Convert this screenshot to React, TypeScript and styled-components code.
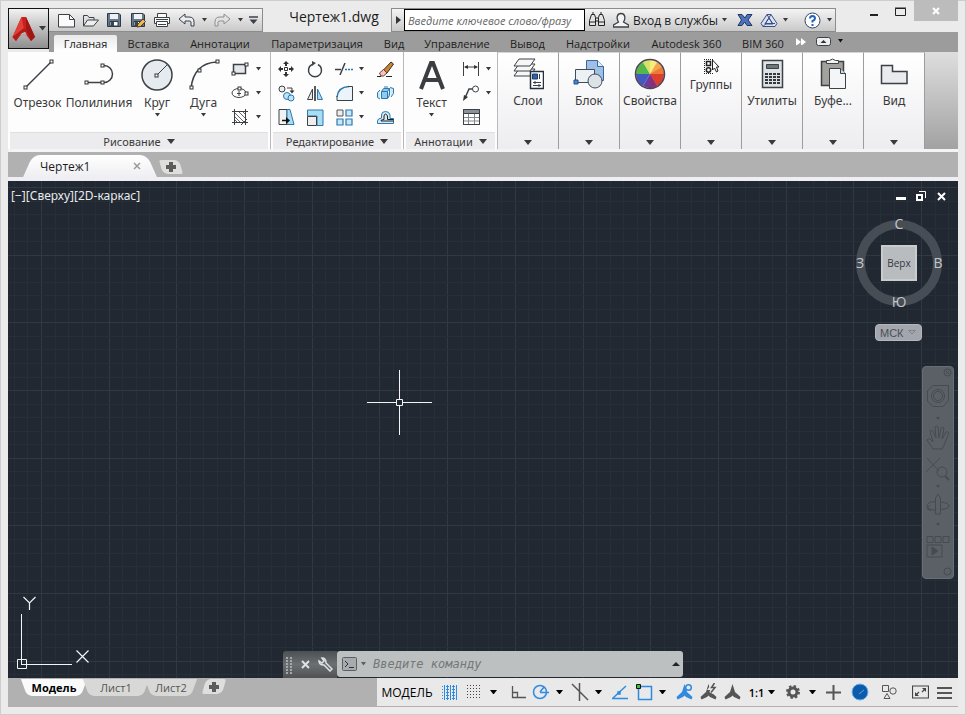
import React from "react";
import styled, { createGlobalStyle } from "styled-components";

const UI = `"Open Sans", "Noto Sans", sans-serif`;
const LABEL = `"Noto Sans", "Open Sans", sans-serif`;

const GlobalStyle = createGlobalStyle`
  * { box-sizing: border-box; }
  body { margin: 0; background: #ebebeb; font-family: ${UI}; color: #1c1c1c; }
  button { font: inherit; color: inherit; background: none; border: 0; padding: 0; margin: 0; }
  svg { display: block; flex: none; }
`;

/* ---------- Shell ---------- */

const Window = styled.div`
  display: flex;
  flex-direction: column;
  min-height: 100vh;
  padding: 0 8px 8px;
  background: #ebebeb;
  box-shadow: inset 0 0 0 1px #cdcdcd;
`;

const Header = styled.header`
  display: grid;
  grid-template-columns: 41px 1fr;
  grid-template-rows: 32px 20px;
`;

const AppButton = styled.button`
  grid-row: 1 / 3;
  height: 41px;
  margin-top: 8px;
  border: 1px solid #111;
  background: linear-gradient(#f2f2f2, #b5b5b5 60%, #8f8f8f);
  display: flex;
  align-items: center;
  justify-content: center;
  gap: 3px;
`;

const TitleRow = styled.div`
  display: flex;
  align-items: flex-end;
`;

const ToolStrip = styled.div`
  display: flex;
  align-items: center;
  flex: none;
  height: 24px;
  border: 1px solid #8c8c8c;
  background: linear-gradient(#f4f4f4, #c9c9c9);
`;

const QuickAccess = styled(ToolStrip)`
  width: 214px;
  padding-left: 5px;
  border-left: 0;
`;

const IconButton = styled.button<{ $w?: number; $gap?: number }>`
  width: ${(p) => p.$w ?? 24}px;
  height: 22px;
  margin-left: ${(p) => p.$gap ?? 0}px;
  flex: none;
  display: flex;
  align-items: center;
  justify-content: center;
`;

const DocTitle = styled.h1`
  margin: 0;
  width: 128px;
  height: 24px;
  padding-left: 14px;
  text-align: center;
  font: 400 14px/18px ${UI};
`;

const SearchStrip = styled(ToolStrip)`
  width: 445px;
  font-size: 12px;
`;

const SearchInput = styled.input`
  width: 181px;
  flex: none;
  height: 22px;
  padding: 0 3px;
  border: 1px solid #000;
  border-radius: 0;
  background: #fff;
  font: italic 11px/20px ${UI};
  &::placeholder { color: #666; opacity: 1; }
`;

const SignIn = styled.button`
  width: 104px;
  flex: none;
  display: flex;
  align-items: center;
  gap: 4px;
  white-space: nowrap;
  font-size: 12px;
`;

const Divider = styled.span`
  width: 1px;
  height: 22px;
  background: #a8a8a8;
  margin-left: 5px;
`;

const WindowButtons = styled.div`
  display: flex;
  align-self: flex-start;
  margin-left: auto;
`;

const WindowButton = styled.button<{ $close?: boolean }>`
  width: ${(p) => (p.$close ? 44 : 27)}px;
  height: ${(p) => (p.$close ? 21 : 23)}px;
  display: flex;
  align-items: center;
  justify-content: center;
  background: ${(p) => (p.$close ? "#bcbcbc" : "none")};
`;

const RibbonTabs = styled.nav`
  display: flex;
  align-items: flex-end;
  padding-left: 5px;
  background: #9c9c9c;
  font-size: 11px;
`;

const RibbonTab = styled.button<{ $w: number; $active?: boolean }>`
  width: ${(p) => p.$w}px;
  height: 17px;
  line-height: 17px;
  white-space: nowrap;
  display: flex;
  justify-content: center;
  flex: none;
  background: ${(p) => (p.$active ? "linear-gradient(#e9e9e9, #fff)" : "none")};
  border-radius: 2px 2px 0 0;
`;

/* ---------- Ribbon ---------- */

const Ribbon = styled.section`
  display: flex;
  height: 100px;
  border-bottom: 3px solid #f4f4f6;
  background: linear-gradient(#dedede, #a2a2a2);
  font-family: ${LABEL};
  font-size: 12px;
  color: #3a3a3a;
`;

const Panel = styled.div<{ $w: number }>`
  width: ${(p) => p.$w}px;
  flex: none;
  display: flex;
  flex-direction: column;
  background: #fdfdfd;
  border-right: 1px solid #b9b9b9;
`;

const PanelBody = styled.div`
  flex: 1;
  display: flex;
  padding-top: 5px;
`;

const PanelTitle = styled.button`
  height: 17px;
  margin: 0 2px;
  background: #ececee;
  border-top: 1px solid #dedede;
  display: flex;
  align-items: center;
  justify-content: center;
  gap: 6px;
  font-size: 11px;
`;

const BigTool = styled.button<{ $w: number }>`
  width: ${(p) => p.$w}px;
  flex: none;
  display: flex;
  flex-direction: column;
  align-items: center;
  white-space: nowrap;
`;

const ToolLabel = styled.span`
  line-height: 16px;
  margin: 2px 0;
`;

const ToolGrid = styled.div<{ $cols: string }>`
  display: grid;
  grid-template-columns: ${(p) => p.$cols};
  grid-auto-rows: 24px;
`;

const Cell = styled.button`
  display: flex;
  align-items: center;
  justify-content: center;
`;

const SlimPanel = styled.button`
  width: 61px;
  flex: none;
  display: flex;
  flex-direction: column;
  align-items: center;
  padding: 4px 0;
  border: solid;
  border-width: 1px 1px 0 0;
  border-color: #d4d4d4 #9d9d9d;
  background: linear-gradient(#fff, #ededf0);
  white-space: nowrap;
`;

const SlimLabel = styled.span`
  line-height: 16px;
  margin: 2px 0 auto;
`;

/* ---------- File tabs ---------- */

const FileTabs = styled.div`
  display: flex;
  align-items: flex-end;
  height: 29px;
  padding-left: 20px;
  background: #b1b1b1;
  border-bottom: 4px solid #efeff3;
`;

const FileTab = styled.div`
  position: relative;
  isolation: isolate;
  width: 124px;
  height: 22px;
  padding: 0 8px 0 12px;
  display: flex;
  align-items: center;
  justify-content: space-between;
  font-size: 12px;
  &::before, &::after {
    content: "";
    position: absolute;
    z-index: -1;
    top: 0;
    bottom: 0;
    width: 70%;
    background: linear-gradient(#fff, #efeff3);
  }
  &::before { left: 0; transform: skewX(-24deg); border-radius: 7px 0 0 0; }
  &::after { right: 0; transform: skewX(24deg); border-radius: 0 7px 0 0; }
`;

const AddTab = styled.button<{ $flip?: boolean }>`
  position: relative;
  isolation: isolate;
  width: 20px;
  height: ${(p) => (p.$flip ? 15 : 14)}px;
  margin: ${(p) => (p.$flip ? "0 0 0 9px" : "0 0 3px 9px")};
  display: flex;
  align-items: center;
  justify-content: center;
  &::before {
    content: "";
    position: absolute;
    z-index: -1;
    inset: 0;
    border-radius: ${(p) => (p.$flip ? "5px 2px 5px 2px" : "2px 5px 2px 5px")};
    background: #dededd;
    transform: skewX(${(p) => (p.$flip ? -16 : 16)}deg);
  }
`;

/* ---------- Drawing area ---------- */

const Viewport = styled.main`
  position: relative;
  flex: 1;
  display: flex;
  flex-direction: column;
  background: #212832;
  color: #e8eaec;
  overflow: hidden;
`;

const GridLines = styled.svg`
  position: absolute;
  inset: 0;
  width: 100%;
  height: 100%;
`;

const Crosshair = styled.svg`
  position: absolute;
  left: 359px;
  top: 189px;
`;

const UcsIcon = styled.svg`
  position: absolute;
  left: 8px;
  bottom: 0;
`;

const ViewportBar = styled.div`
  position: relative;
  display: flex;
  justify-content: space-between;
  padding: 6px 10px 0 3px;
  font: 12px/16px ${LABEL};
`;

const ViewportLinks = styled.div`
  display: flex;
  height: 18px;
`;

const ViewportButtons = styled.div`
  display: flex;
  gap: 6px;
`;

const SmallButton = styled.button`
  width: 14px;
  height: 18px;
  display: flex;
  align-items: center;
  justify-content: center;
`;

const Navigation = styled.aside`
  position: relative;
  display: flex;
  flex-direction: column;
  align-items: flex-end;
  padding-top: 10px;
`;

const Compass = styled.div`
  position: relative;
  width: 96px;
  height: 96px;
  margin-right: 11px;
  display: grid;
  grid-template-columns: 18px 1fr 18px;
  grid-template-rows: 18px 1fr 18px;
  place-items: center;
  font: 14px/18px ${UI};
  color: #c3c7cb;
  &::before {
    content: "";
    position: absolute;
    inset: 5px;
    border: 9px solid #474d55;
    border-radius: 50%;
  }
`;

const Direction = styled.button<{ $area: string }>`
  position: relative;
  grid-area: ${(p) => p.$area};
`;

const CubeFace = styled.button`
  position: relative;
  grid-area: 2 / 2;
  width: 36px;
  height: 36px;
  background: #b9bcbf;
  border: 2px solid #c9cccf;
  color: #33383e;
  font: 10px/14px ${UI};
`;

const CoordSystem = styled.button`
  width: 47px;
  height: 17px;
  margin: 13px 36px 0 0;
  display: flex;
  align-items: center;
  justify-content: space-between;
  padding: 0 5px 0 4px;
  border: 1px solid #b4b7bc;
  border-radius: 4px;
  background: #a3a6ad;
  color: #4a4f58;
  font: 11px/14px "Liberation Sans", sans-serif;
`;

const NavBar = styled.div`
  width: 32px;
  height: 213px;
  margin: 25px 4px 0 0;
  display: flex;
  flex-direction: column;
  border: 1px solid #686e74;
  border-radius: 4px;
  background: #5a6066;
`;

const NavButton = styled.button<{ $h: number; $end?: boolean }>`
  height: ${(p) => p.$h}px;
  display: flex;
  align-items: center;
  justify-content: ${(p) => (p.$end ? "flex-end" : "center")};
  padding-right: ${(p) => (p.$end ? 1 : 0)}px;
`;

const CommandLine = styled.div`
  position: relative;
  display: flex;
  width: 400px;
  height: 27px;
  margin: auto auto 0;
`;

const CommandHandle = styled.div`
  width: 54px;
  display: flex;
  align-items: center;
  justify-content: space-between;
  padding: 0 5px 0 3px;
  background: linear-gradient(#4c5053, #6b6f71 50%, #4e5255);
  border-radius: 3px 0 0 0;
`;

const CommandField = styled.div`
  flex: 1;
  display: flex;
  align-items: center;
  padding: 0 3px 0 5px;
  margin-bottom: 1px;
  background: #bcc0c1;
  border-radius: 3px;
`;

const CommandInput = styled.input`
  flex: 1;
  min-width: 0;
  border: 0;
  padding: 0 0 0 4px;
  background: none;
  font: italic 12px/18px "DejaVu Sans Mono", monospace;
  &::placeholder { color: #747879; opacity: 1; }
`;

/* ---------- Bottom bar ---------- */

const Footer = styled.footer`
  display: flex;
  height: 29px;
  background: #b1b1b1;
`;

const LayoutTabs = styled.div`
  display: flex;
  align-items: flex-start;
  padding: 1px 0 0 15px;
  font-size: 11px;
`;

const LayoutTab = styled.button<{ $w: number; $active?: boolean }>`
  position: relative;
  isolation: isolate;
  width: ${(p) => p.$w}px;
  height: 17px;
  line-height: 16px;
  font-weight: ${(p) => (p.$active ? 700 : 400)};
  color: ${(p) => (p.$active ? "#000" : "#555")};
  &::before, &::after {
    content: "";
    position: absolute;
    z-index: -1;
    top: 0;
    bottom: 0;
    width: 70%;
    background: ${(p) => (p.$active ? "#fafafa" : "#d8d8d6")};
  }
  &::before { left: 1px; transform: skewX(20deg); border-radius: 0 0 0 5px; }
  &::after { right: 1px; transform: skewX(-20deg); border-radius: 0 0 5px 0; }
`;

const StatusBar = styled.div`
  width: 581px;
  height: 28px;
  margin-left: auto;
  display: flex;
  align-items: center;
  background: #e9e9ea;
  font-size: 12px;
  color: #000;
`;

const StatusText = styled.button<{ $w: number; $gap?: number; $tight?: boolean }>`
  width: ${(p) => p.$w}px;
  margin-left: ${(p) => p.$gap ?? 0}px;
  display: flex;
  align-items: center;
  justify-content: center;
  gap: 4px;
  font-size: ${(p) => (p.$tight ? 11 : 12)}px;
  font-weight: ${(p) => (p.$tight ? 600 : 400)};
  white-space: nowrap;
`;

/* ---------- Icons ---------- */

type IconProps = {
  w?: number;
  h?: number;
  box?: string;
  s?: string;
  sw?: number;
  children: React.ReactNode;
};

const Icon = ({ w = 18, h = 18, box, s = "#3c4146", sw = 1, children }: IconProps) => (
  <svg width={w} height={h} viewBox={box ?? `0 0 ${w} ${h}`} fill="none" stroke={s} strokeWidth={sw} aria-hidden="true">
    {children}
  </svg>
);

const Caret = ({ size = 6, color = "#3a3a3a" }: { size?: number; color?: string }) => (
  <svg width={size} height={size / 2 + 1} viewBox="0 0 8 5" preserveAspectRatio="none" aria-hidden="true">
    <path d="M0 0h8L4 5z" fill={color} />
  </svg>
);

const Node = ({ x, y }: { x: number; y: number }) => (
  <rect x={x - 1.5} y={y - 1.5} width="3" height="3" fill="#fff" stroke="#333" />
);

const Plus = () => (
  <Icon w={10} h={10} s="#5c5c5c" sw={4}><path d="M5 0v10M0 5h10" /></Icon>
);

const Floppy = ({ pencil }: { pencil?: boolean }) => (
  <Icon w={16} h={16}>
    <path d="M1.500 1.500h11.500l1.500 1.500v11.500h-13z" fill="#64798e" stroke="#2f3b47" />
    <path d="M4 2h8v5H4z" fill="#eef2f5" stroke="none" />
    <path d="M4 9.500h8V14H4z" fill="#fff" stroke="#2f3b47" />
    <path d="M5 10h3v4H5z" fill="#39454f" stroke="none" />
    {pencil && <path d="M7 15l1-3 5-5 2.500 2.500-5 5z" fill="#f0b64f" stroke="#5d3f14" />}
  </Icon>
);

const AnnotationMark = ({ mode }: { mode: "star" | "bolt" | "plain" }) => {
  const c = mode === "star" ? STATUS_BLUE : "#555";
  return (
    <Icon w={18} h={18} s={c}>
      <path d="M8.500 1L11 9l5.500 5-1 2.500L10 14 8.500 12.500 7 14l-5.500 2.500-1-2.500L6 9z" fill={c} stroke="none" />
      {mode === "star" && <circle cx="12.500" cy="4.500" r="2.800" fill="#e9e9ea" strokeWidth="1.500" />}
      {mode === "bolt" && (
        <>
          <path d="M14.500 0L11 5h3l-3 5" stroke="#e9e9ea" strokeWidth="4" />
          <path d="M14.500 0L11.500 4.500h3.500l-4 5" strokeWidth="1.500" />
        </>
      )}
    </Icon>
  );
};

/* ---------- Data ---------- */

const STATUS_BLUE = "#2f8ae0";
const BLUE = "#2e78ad";

const ribbonTabs: [string, number][] = [
  ["Главная", 63], ["Вставка", 63], ["Аннотации", 80], ["Параметризация", 114],
  ["Вид", 40], ["Управление", 86], ["Вывод", 55], ["Надстройки", 86],
  ["Autodesk 360", 91], ["BIM 360", 62],
];

const range = (n: number) => Array.from({ length: n }, (_, i) => i);
const GRID_STEP = 880 / 65;

const wheelColors = ["#f7ec7c", "#f3a54a", "#dd3f2c", "#6b3c9c", "#4459c0", "#55b649"];

const wheelSlice = (i: number) => {
  const a = (i * Math.PI) / 3 - (2 * Math.PI) / 3;
  const b = a + Math.PI / 3;
  return `M16 16L${16 + 14 * Math.cos(a)} ${16 + 14 * Math.sin(a)}A14 14 0 0 1 ${16 + 14 * Math.cos(b)} ${16 + 14 * Math.sin(b)}z`;
};

/* ---------- Sections ---------- */

const TopBar = () => (
  <Header>
    <AppButton aria-label="Меню приложения">
      <svg width="24" height="26" viewBox="0 0 24 26" aria-hidden="true">
        <path d="M9.500 1h4.500l9 20-4 4-4-5-3-2-4 2-4 5-3.500-4z" fill="#c9201f" />
        <path d="M9.500 1l2.500 12-4 5-7.500 3z" fill="#df4038" />
        <path d="M14 1l9 20-4 4-5-11z" fill="#a01614" />
        <path d="M8 20l4-7 3 7-3-2z" fill="#b9b9b9" />
        <path d="M.5 21L12 12l3 3-7 3-4 7z" fill="#b31b19" />
      </svg>
      <Caret size={7} />
    </AppButton>
    <TitleRow>
      <QuickAccess>
        <IconButton aria-label="Новый">
          <Icon w={17} h={15}><path d="M.5 1.500h11l5 5v7.500H.5z" fill="#fafafa" /><path d="M11.500 1.500v5h5" /></Icon>
        </IconButton>
        <IconButton aria-label="Открыть">
          <Icon w={17} h={15}><path d="M1.500 13V2.500h4l1.500 2h5V7" /><path d="M1.500 13l4-6h11l-5 6z" fill="#eee" /></Icon>
        </IconButton>
        <IconButton aria-label="Сохранить"><Floppy /></IconButton>
        <IconButton aria-label="Сохранить как"><Floppy pencil /></IconButton>
        <IconButton aria-label="Печать">
          <Icon w={18} h={16}>
            <path d="M4.500 5V1.500h9V5M1.500 5.500h15v6h-15z" fill="#fafafa" />
            <path d="M3.500 9.500h11v5h-11z" fill="#fff" /><path d="M3 7.500h12M5 12.500h8" />
          </Icon>
        </IconButton>
        <IconButton aria-label="Отменить">
          <Icon w={17} h={14}><path d="M1 6l6-5v3h4q5 0 5 5v4h-3V9q0-1-2-1H7v3z" fill="#e8edf2" /></Icon>
        </IconButton>
        <IconButton $w={12} aria-label="Список отмены"><Caret size={5} /></IconButton>
        <IconButton aria-label="Повторить">
          <Icon w={17} h={14} s="#8b8f93"><path d="M16 6l-6-5v3H6Q1 4 1 9v4h3V9q0-1 2-1h4v3z" fill="#e2e2e2" /></Icon>
        </IconButton>
        <IconButton $w={12} aria-label="Список повтора"><Caret size={5} /></IconButton>
        <IconButton $w={14} aria-label="Настройка панели">
          <Icon w={9} h={8}><path d="M0 1h9" strokeWidth="1.500" /><path d="M.5 3.500h8L4.500 8z" fill="#3c4146" stroke="none" /></Icon>
        </IconButton>
      </QuickAccess>
      <DocTitle>Чертеж1.dwg</DocTitle>
      <SearchStrip>
        <IconButton $w={12} aria-label="Свернуть поиск">
          <Icon w={5} h={8}><path d="M0 0v8l5-4z" fill="#333" stroke="none" /></Icon>
        </IconButton>
        <SearchInput aria-label="Поиск" placeholder="Введите ключевое слово/фразу" />
        <IconButton aria-label="Найти">
          <Icon w={16} h={16} s="#222" sw={1}>
            <path d="M2.500 2.500h3l1 3v8h-6v-5zM13.500 2.500h-3l-1 3v8h6v-5z" fill="#e4e4e4" />
            <path d="M.5 10h6M9.500 10h6M6.500 6h3M6.500 9h3M3 1h2M11 1h2" />
          </Icon>
        </IconButton>
        <IconButton aria-label="Профиль">
          <Icon w={16} h={17}><path d="M5.500 10C3 6 4 1.500 8 1.500S13 6 10.500 10l5 3v2H.5v-2z" fill="#f4f4f4" strokeWidth="1.300" /></Icon>
        </IconButton>
        <SignIn>Вход в службы <Caret size={5} /></SignIn>
        <Icon w={16} h={14} s="#1f3768">
          <path d="M1 1.500h4l3 3.500 2-3.500h5L11 7l4 5.500h-5L7.500 9 5 12.500H1L4.500 7z" fill="#4d72b8" />
        </Icon>
        <IconButton $w={20} $gap={6} aria-label="Autodesk 360">
          <Icon w={18} h={15} s="#3a4f86">
            <path d="M7 1.500h4l6 9-2 3H3l-2-3z" fill="#dbe3f2" /><path d="M9 5l4 6H5zM7 1.500L12 10M11 1.500L5 11M3 13.500l3-3h9" />
          </Icon>
        </IconButton>
        <IconButton $w={12} aria-label="Список Autodesk 360"><Caret size={5} /></IconButton>
        <Divider />
        <IconButton $w={20} $gap={6} aria-label="Справка">
          <Icon w={17} h={17} s="#31465f">
            <circle cx="8.500" cy="8.500" r="7.500" fill="#fff" />
            <path d="M6 6.500Q6 4 8.500 4T11 6.500Q11 8 8.500 9v1.500M8.500 12v2" stroke="#2263b5" strokeWidth="2" />
          </Icon>
        </IconButton>
        <IconButton $w={14} aria-label="Список справки"><Caret size={5} /></IconButton>
      </SearchStrip>
      <WindowButtons>
        <WindowButton aria-label="Свернуть"><Icon w={10} h={10} s="#222" sw={2}><path d="M1 8h8" /></Icon></WindowButton>
        <WindowButton aria-label="Развернуть"><Icon w={11} h={9} s="#222"><path d="M.5 1.500h10v7H.5zM0 1h11" /></Icon></WindowButton>
        <WindowButton $close aria-label="Закрыть"><Icon w={8} h={8} s="#fff" sw={2}><path d="M1 1l6 6M7 1L1 7" /></Icon></WindowButton>
      </WindowButtons>
    </TitleRow>
    <RibbonTabs>
      {ribbonTabs.map(([name, w], i) => (
        <RibbonTab key={name} $w={w} $active={i === 0}>{name}</RibbonTab>
      ))}
      <IconButton $w={14} aria-label="Другие вкладки">
        <Icon w={10} h={8} box="0 -1 10 8"><path d="M0 0l5 4-5 4zM5 0l5 4-5 4z" fill="#fff" stroke="none" /></Icon>
      </IconButton>
      <IconButton $w={30} aria-label="Свернуть ленту">
        <Icon w={15} h={9}><rect x=".5" y=".5" width="14" height="8" rx="2" fill="#eee" /><path d="M4.500 6h6l-3-3z" fill="#333" stroke="none" /></Icon>
      </IconButton>
      <IconButton $w={5} aria-label="Вид ленты"><Caret size={5} color="#111" /></IconButton>
    </RibbonTabs>
  </Header>
);

const DrawPanel = () => (
  <Panel $w={263}>
    <PanelBody>
      <BigTool $w={59}>
        <Icon w={36} h={36}><path d="M5 31L31 5" strokeWidth="1.500" /><Node x={5.500} y={30.500} /><Node x={31.500} y={4.500} /></Icon>
        <ToolLabel>Отрезок</ToolLabel>
      </BigTool>
      <BigTool $w={64}>
        <Icon w={36} h={36}><path d="M5 25.500h18a8.500 8.500 0 0 0 0-17" strokeWidth="1.500" /><Node x={5.500} y={25.500} /><Node x={21.500} y={25.500} /><Node x={21.500} y={8.500} /></Icon>
        <ToolLabel>Полилиния</ToolLabel>
      </BigTool>
      <BigTool $w={52}>
        <Icon w={36} h={36}>
          <circle cx="18" cy="18" r="15" fill="#e6ebef" strokeWidth="1.500" /><path d="M18 18L28 8" /><Node x={17.500} y={18.500} />
        </Icon>
        <ToolLabel>Круг</ToolLabel>
        <Caret size={5} />
      </BigTool>
      <BigTool $w={41}>
        <Icon w={36} h={36}><path d="M5 31Q8 6 31 5" strokeWidth="1.500" /><Node x={5.500} y={30.500} /><Node x={13.500} y={13.500} /><Node x={31.500} y={4.500} /></Icon>
        <ToolLabel>Дуга</ToolLabel>
        <Caret size={5} />
      </BigTool>
      <ToolGrid $cols="32px 4px">
        <Cell aria-label="Прямоугольник"><Icon w={18} h={14}><path d="M2.500 2.500h12v9h-12z" fill="#e4e8ec" strokeWidth="1.500" /><Node x={2.500} y={11.500} /><Node x={15.500} y={2.500} /></Icon></Cell>
        <Cell aria-label="Прямоугольник, варианты"><Caret size={5} /></Cell>
        <Cell aria-label="Эллипс"><Icon w={18} h={14}><ellipse cx="8" cy="7" rx="7" ry="4.500" /><path d="M8 5v5M6 7.500h4" /><Node x={8.500} y={2.500} /><Node x={15.500} y={7.500} /></Icon></Cell>
        <Cell aria-label="Эллипс, варианты"><Caret size={5} /></Cell>
        <Cell aria-label="Штриховка"><Icon w={18} h={18}><path d="M1 3.500h16M1 14.500h16M3.500 1v16M14.500 1v16" /><path d="M4 5l9 9M4 9l5 5M8 4l6 6M12 4l2 2M4 12l2 2" strokeWidth=".8" /><path d="M10 17l6-6" /></Icon></Cell>
        <Cell aria-label="Штриховка, варианты"><Caret size={5} /></Cell>
      </ToolGrid>
    </PanelBody>
    <PanelTitle>Рисование <Caret size={8} /></PanelTitle>
  </Panel>
);

const ModifyPanel = () => (
  <Panel $w={133}>
    <PanelBody>
      <ToolGrid $cols="30px 28px 30px 4px 44px">
        <Cell aria-label="Перенести">
          <Icon w={16} h={16} s="#333">
            <path d="M6.500 6.500h3v3h-3z" fill="#fff" />
            <path d="M8 0l3 3H9v2H7V3H5zM8 16l3-3H9v-2H7v2H5zM0 8l3-3v2h2v2H3v2zM16 8l-3-3v2h-2v2h2v2z" fill="#333" stroke="none" />
          </Icon>
        </Cell>
        <Cell aria-label="Повернуть"><Icon w={16} h={17}><path d="M5 3.500A6.500 6.500 0 1 0 11 3.500" strokeWidth="1.500" /><path d="M5 0v5l4-3z" fill="#444" stroke="none" /></Icon></Cell>
        <Cell aria-label="Обрезать"><Icon w={18} h={12}><path d="M0 6.500h6M5 12L10 0" strokeWidth="1.500" /><path d="M10 6.500h8" stroke={BLUE} strokeDasharray="2 1" strokeWidth="1.500" /></Icon></Cell>
        <Cell aria-label="Обрезать, варианты"><Caret size={5} /></Cell>
        <Cell aria-label="Стереть">
          <Icon w={17} h={17}><path d="M6.500 9l7.500-8 2.500 2-6.500 9z" fill="#c98436" stroke="#3d2c1a" /><path d="M2.500 12l4-3.500 3.500 3.500-3.500 3H4z" fill="#f3c5be" stroke="#6b3b34" /><path d="M0 15.500h4M9 15.500h6" stroke="#222" /></Icon>
        </Cell>
        <Cell aria-label="Копировать">
          <Icon w={17} h={17}><circle cx="4" cy="4" r="3" fill="#eee" /><circle cx="9" cy="11" r="3.500" fill="#bfe2f7" stroke={BLUE} /><circle cx="13" cy="13" r="3" fill="#bfe2f7" stroke={BLUE} /><path d="M9 3h5v4" /><path d="M11.500 5.500h5L14 8.500z" fill="#333" stroke="none" /></Icon>
        </Cell>
        <Cell aria-label="Зеркало"><Icon w={16} h={15}><path d="M5.500 3v10.500h-5z" fill="#e8e8e8" /><path d="M10.500 3v10.500h5z" fill="#a9dcf5" stroke={BLUE} /><path d="M8 0v15" stroke="#222" strokeWidth="1.500" /></Icon></Cell>
        <Cell aria-label="Сопряжение"><Icon w={17} h={16}><path d="M1 12Q2 2 13 1.500h3.500v14H1z" fill="#eaf4fa" stroke="none" /><path d="M1 12Q2 2 13 1.500" stroke={BLUE} strokeWidth="1.500" /><path d="M1 11v4.500h15.500V1.500H12" /></Icon></Cell>
        <Cell aria-label="Сопряжение, варианты"><Caret size={5} /></Cell>
        <Cell aria-label="Расчленить"><Icon w={17} h={15} s={BLUE}><path d="M4.500 5.500h6v7h-6zM4.500 5.500l2-3h6l-2 3M12.500 2.500v7l-2 3" fill="#8dcdf0" /><path d="M13 1.500l3.500 1v5L14 11M3 4L.5 6.500v5L3 13M7 1h4" fill="#c8e8f9" /></Icon></Cell>
        <Cell aria-label="Растянуть"><Icon w={17} h={16}><path d="M1 .5h8v15H1z" fill="#f2f2f2" /><path d="M9 .5h3l4 15H9z" fill="#a9dcf5" stroke={BLUE} /><path d="M4 11.500h6" strokeWidth="1.500" stroke="#111" /><path d="M8 8l4 3.500L8 15z" fill="#111" stroke="none" /></Icon></Cell>
        <Cell aria-label="Масштаб"><Icon w={17} h={17}><path d="M.5 1h15.500v15.500H10V7H.5z" fill="#a9dcf5" stroke={BLUE} /><path d="M.5 7.500h9v9h-9z" fill="#eee" /></Icon></Cell>
        <Cell aria-label="Массив">
          <Icon w={17} h={17} s={BLUE}><path d="M1 1h6v6H1z" fill="#eee" stroke="#555" /><path d="M10 1h6v6h-6zM1 10h6v6H1zM10 10h6v6h-6z" fill="#c8e8f9" strokeWidth="1.200" /></Icon>
        </Cell>
        <Cell aria-label="Массив, варианты"><Caret size={5} /></Cell>
        <Cell aria-label="Подобие"><Icon w={17} h={15}><path d="M.5 13.500h16V8.500h-3.500V5Q12.500 1.500 8.500 1.500T4.500 5v3Q.5 8.500.5 11z" fill="#d4ebf7" stroke={BLUE} /><path d="M4 11q-1-1 3-1.500V6q.5-2 1.500-2T10.500 6v3.500h6M4 11h12.500" stroke="#222" /></Icon></Cell>
      </ToolGrid>
    </PanelBody>
    <PanelTitle>Редактирование <Caret size={8} /></PanelTitle>
  </Panel>
);

const AnnotatePanel = () => (
  <Panel $w={94}>
    <PanelBody>
      <BigTool $w={55}>
        <Icon w={36} h={36} s="#3a3d42" sw={4}><path d="M7 32L17 6h2l10 26M10 23h15" /></Icon>
        <ToolLabel>Текст</ToolLabel>
        <Caret size={5} />
      </BigTool>
      <ToolGrid $cols="24px 10px">
        <Cell aria-label="Размер"><Icon w={16} h={14}><path d="M.5 0v14M15.500 0v14M2 5h12" /><path d="M1 5l4-2v4zM15 5l-4-2v4z" fill="#333" stroke="none" /></Icon></Cell>
        <Cell aria-label="Размер, варианты"><Caret size={5} /></Cell>
        <Cell aria-label="Выноска"><Icon w={17} h={16}><circle cx="12.500" cy="4" r="3" /><path d="M9.500 4H6l-4 9" strokeWidth="1.500" /><path d="M0 16l1-6 4 2z" fill="#333" stroke="none" /></Icon></Cell>
        <Cell aria-label="Выноска, варианты"><Caret size={5} /></Cell>
        <Cell aria-label="Таблица"><Icon w={17} h={16}><path d="M.5.5h16v15H.5z" fill="#fff" /><path d="M1 1h15v3H1z" fill="#8b9198" stroke="none" /><path d="M0 4.500h17M.5.5h16v15H.5z" /><path d="M1 8.500h15M1 12h15M5.500 5v10M11.500 5v10" stroke="#85898d" /></Icon></Cell>
      </ToolGrid>
    </PanelBody>
    <PanelTitle>Аннотации <Caret size={8} /></PanelTitle>
  </Panel>
);

const slimPanels: { name: string; icon: React.ReactNode }[] = [
  {
    name: "Слои",
    icon: (
      <Icon w={32} h={34}>
        {[18, 13, 8].map((y) => (
          <path key={y} d={`M2 ${y + 1}l5-7h16l-5 7z`} fill="#f7f7f7" />
        ))}
        <path d="M18.500 14.500h13v17h-13z" fill="#fff" stroke="#27313b" strokeWidth="1.500" />
        <path d="M20.500 17h5v5h-5z" fill="#2e63a8" stroke="#1c3d6a" /><path d="M27.500 17v5M21 25.500h8M21 28.500h8M23 24v3M27 27v3" />
      </Icon>
    ),
  },
  {
    name: "Блок",
    icon: (
      <Icon w={32} h={34} s="#3e4c5c">
        <path d="M13.500 3.500h11l6 6v14h-17z" fill="#9fc0e6" stroke="#40659a" /><path d="M24.500 3.500v6h6" fill="#e5effa" stroke="#40659a" />
        <path d="M2.500 12.500h19v13h-19z" fill="#eef1f4" /><circle cx="22" cy="24" r="7" fill="#dde2e7" />
        <path d="M1 23h4v4H1z" fill="#4b87cf" stroke="#1f4d87" />
      </Icon>
    ),
  },
  {
    name: "Свойства",
    icon: (
      <Icon w={32} h={34} box="0 -1 32 34" s="none">
        {wheelColors.map((c, i) => <path key={c} d={wheelSlice(i)} fill={c} />)}
        <path d="M16 16V2a14 14 0 0 0-7 1.900z" fill="#d8e26a" />
        <path d="M16 16L30 16a14 14 0 0 0-1.900-7z" fill="#ea7a38" />
        <path d="M16 16V30a14 14 0 0 0 7-1.900z" fill="#8c2f78" />
        <circle cx="16" cy="16" r="14.500" stroke="#4b4453" strokeWidth="1.500" />
      </Icon>
    ),
  },
  {
    name: "Группы",
    icon: (
      <Icon w={16} h={18} s="#222">
        <path d="M1 2.500h9M1 16.500h9M1.500 2v14" strokeDasharray="1 1" /><path d="M3.500 4.500h4v4h-4z" strokeWidth="1.500" /><circle cx="5.500" cy="13" r="2.200" strokeWidth="1.500" />
        <path d="M9.500 3v10l2-2 2 4 1.500-1-1.500-4h2.500z" fill="#fff" />
      </Icon>
    ),
  },
  {
    name: "Утилиты",
    icon: (
      <Icon w={32} h={34}>
        <path d="M6.500 3.500h20v27h-20z" fill="#dfe2e5" strokeWidth="1.500" /><path d="M10.500 7.500h12v4h-12z" fill="#6d757d" />
        {range(16).map((i) => (
          <rect key={i} x={9 + (i % 4) * 4} y={16 + Math.floor(i / 4) * 3} width="3" height="2" fill="#33383d" stroke="none" />
        ))}
      </Icon>
    ),
  },
  {
    name: "Буфе...",
    icon: (
      <Icon w={32} h={34}>
        <path d="M4.500 4.500h22v24h-22z" fill="#a3a19e" strokeWidth="1.500" /><path d="M9.500 6.500v-3h3q3-3 6 0h3v3z" fill="#f3f3f3" />
        <path d="M12.500 11.500h11l5 5v15h-16z" fill="#f4f5f7" /><path d="M23.500 11.500v5h5" fill="#d5d8db" />
      </Icon>
    ),
  },
  {
    name: "Вид",
    icon: <Icon w={32} h={34}><path d="M3.500 8.500h11v6h14.500v12h-25.500z" fill="#e9ebee" strokeWidth="1.500" /></Icon>,
  },
];

const DrawingArea = () => (
  <Viewport>
    <GridLines aria-hidden="true" shapeRendering="crispEdges">
      {range(150).map((i) => {
        const x = Math.round(33 + (i - 2) * GRID_STEP);
        return <rect key={`v${i}`} x={x} y="0" width="1" height="100%" fill={(i + 3) % 5 === 0 ? "#303843" : "#262e38"} />;
      })}
      {range(100).map((i) => {
        const y = Math.round(6 + i * GRID_STEP);
        return <rect key={`h${i}`} x="0" y={y} width="100%" height="1" fill={i % 5 === 0 ? "#303843" : "#262e38"} />;
      })}
    </GridLines>
    <Crosshair width="65" height="65" viewBox="0 0 65 65" stroke="#f2f4f5" fill="none" aria-hidden="true">
      <path d="M32.500 0v29M32.500 36v29M0 32.500h29M36 32.500h29M29.500 29.500h6v6h-6z" />
    </Crosshair>
    <UcsIcon width="76" height="84" viewBox="0 0 76 84" stroke="#f2f4f5" fill="none" aria-hidden="true">
      <path d="M5.500 20v50M1.500 65.500h9v9h-9zM5 70.500h51" />
      <path d="M7.500 3l6 6 6-6M13.500 9v7" strokeWidth="1.200" />
      <path d="M60.500 56.500l12 12M72.500 56.500l-12 12" strokeWidth="1.200" />
    </UcsIcon>
    <ViewportBar>
      <ViewportLinks>
        <button>[−]</button><button>[Сверху]</button><button>[2D-каркас]</button>
      </ViewportLinks>
      <ViewportButtons>
        <SmallButton aria-label="Свернуть вид"><Icon w={10} h={10} s="#fff" sw={3}><path d="M0 7.500h10" /></Icon></SmallButton>
        <SmallButton aria-label="Восстановить вид"><Icon w={10} h={10} s="#fff"><path d="M3 .5h6.500V7" /><path d="M1 4h5v5H1z" strokeWidth="2" /></Icon></SmallButton>
        <SmallButton aria-label="Закрыть вид"><Icon w={9} h={9} s="#fff" sw={2}><path d="M1 1l7 7M8 1L1 8" /></Icon></SmallButton>
      </ViewportButtons>
    </ViewportBar>
    <Navigation>
      <Compass>
        <Direction $area="1 / 2">С</Direction>
        <Direction $area="2 / 1">З</Direction>
        <CubeFace>Верх</CubeFace>
        <Direction $area="2 / 3">В</Direction>
        <Direction $area="3 / 2">Ю</Direction>
      </Compass>
      <CoordSystem>МСК <Icon w={8} h={5} s="#7f848b"><path d="M.5.5h7L4 4z" /></Icon></CoordSystem>
      <NavBar>
        <NavButton $h={10} $end aria-label="Закрыть панель"><Icon w={9} h={9} s="#454b51"><circle cx="4.500" cy="4.500" r="3.500" /><path d="M3 3l3 3M6 3L3 6" /></Icon></NavButton>
        <NavButton $h={38} aria-label="Штурвал"><Icon w={24} h={24} s="#454b51"><path d="M7 1.500h15.500v15L17 22.500H7L1.500 17V7z" /><circle cx="12" cy="12" r="6.500" /><circle cx="12" cy="12" r="4.500" /></Icon></NavButton>
        <NavButton $h={6} aria-label="Штурвал, варианты"><Caret size={4} color="#454b51" /></NavButton>
        <NavButton $h={34} aria-label="Панорамирование"><Icon w={24} h={26} s="#454b51"><path d="M7 24L1 15q1-2 3-1l3 3L4 6q1-2 3 0l3 7L9 2q1.500-2 3 0l1 11 2-10q2-2 3 0l-2 11 4-7q2-1 3 1l-5 12-2 4z" /></Icon></NavButton>
        <NavButton $h={27} aria-label="Зумирование"><Icon w={26} h={24} s="#454b51"><path d="M2 1l12 13M15 1L1 15" /><circle cx="17" cy="15" r="5" /><path d="M20 19l4 4" strokeWidth="2" /></Icon></NavButton>
        <NavButton $h={8} aria-label="Зумирование, варианты"><Caret size={4} color="#454b51" /></NavButton>
        <NavButton $h={30} aria-label="Орбита"><Icon w={24} h={24} s="#454b51"><path d="M9.500 5L12 1l2.500 4v16h-5zM9 8.500Q1 9 1 13t9 4M15 9q8 1 8 4t-9 3.500M4 12l-3 3.500 4 2.500" /></Icon></NavButton>
        <NavButton $h={8} aria-label="Орбита, варианты"><Caret size={4} color="#454b51" /></NavButton>
        <NavButton $h={38} aria-label="ShowMotion"><Icon w={24} h={24} s="#454b51"><path d="M1 1.500h6v6H1zM9 1.500h6v6H9zM17 1.500h6v6h-6zM1 10h15v12H1z" /><path d="M6 12l6 4-6 4z" fill="#454b51" /></Icon></NavButton>
        <NavButton $h={10} $end aria-label="Настройка панели навигации"><Icon w={9} h={9} s="#454b51"><circle cx="4.500" cy="4.500" r="3.500" /></Icon></NavButton>
      </NavBar>
    </Navigation>
    <CommandLine>
      <CommandHandle>
        <Icon w={6} h={18} s="#a5a9ab" sw={2}><path d="M1 1v17M5 1v17" strokeDasharray="2 1" /></Icon>
        <SmallButton aria-label="Закрыть командную строку"><Icon w={9} h={9} s="#dfe1e2" sw={2}><path d="M1 1l7 7M8 1L1 8" /></Icon></SmallButton>
        <SmallButton aria-label="Адаптация"><Icon w={15} h={15} s="#dfe1e2" sw={1.500}><path d="M1 4q0 4 5 4l6 6 2-2-6-6Q8 1 4 1l2 3-2 2z" /></Icon></SmallButton>
      </CommandHandle>
      <CommandField>
        <Icon w={15} h={14} s="#5b5f61"><rect x=".5" y=".5" width="14" height="13" rx="1" fill="#a6abad" /><path d="M3 4l3 3-3 3M7 10.500h5" stroke="#2f3335" /></Icon>
        <IconButton $w={12} aria-label="Недавние команды"><Caret size={5} color="#5b5f61" /></IconButton>
        <CommandInput aria-label="Команда" placeholder="Введите команду" />
        <Icon w={8} h={4}><path d="M0 4h8L4 0z" fill="#222" stroke="none" /></Icon>
      </CommandField>
    </CommandLine>
  </Viewport>
);

const Arrow = ({ gap = 1, name }: { gap?: number; name: string }) => (
  <IconButton $w={12} $gap={gap} aria-label={name}><Caret size={7} color="#000" /></IconButton>
);

const BottomBar = () => (
  <Footer>
    <LayoutTabs>
      <LayoutTab $w={62} $active>Модель</LayoutTab>
      <LayoutTab $w={62}>Лист1</LayoutTab>
      <LayoutTab $w={48}>Лист2</LayoutTab>
      <AddTab $flip aria-label="Новый лист"><Plus /></AddTab>
    </LayoutTabs>
    <StatusBar>
      <StatusText $w={60}>МОДЕЛЬ</StatusText>
      <IconButton $w={22} $gap={2} aria-label="Сетка">
        <Icon w={16} h={16} s={STATUS_BLUE}><path d="M2.500 1v15M5.500 1v15M8.500 1v15M11.500 1v15M14.500 1v15" /><path d="M0 2.500h16M0 5.500h16M0 8.500h16M0 11.500h16M0 14.500h16" strokeDasharray="1 1" /></Icon>
      </IconButton>
      <IconButton $w={22} $gap={2} aria-label="Шаговая привязка">
        <Icon w={16} h={16} s="#444">{[1, 4, 7, 10, 13].map((y) => <path key={y} d={`M1 ${y}.5h14`} strokeDasharray="1 2" />)}</Icon>
      </IconButton>
      <Arrow name="Параметры привязки" gap={2} />
      <IconButton $w={22} $gap={8} aria-label="Орто"><Icon w={16} h={16} s="#555"><path d="M2.500 2v11.500H16M3 8.500h4.500V13" strokeWidth="1.300" /></Icon></IconButton>
      <IconButton $w={22} aria-label="Полярное отслеживание"><Icon w={17} h={16} s={STATUS_BLUE} sw={1.500}><circle cx="8" cy="8" r="6.500" /><path d="M8 8.500h9M8 8l4-5" /></Icon></IconButton>
      <Arrow name="Параметры отслеживания" gap={2} />
      <IconButton $w={22} $gap={4} aria-label="Изометрия"><Icon w={18} h={18} s="#555" sw={1.500}><path d="M1 1l16 16M8.500 0v18" /></Icon></IconButton>
      <Arrow name="Параметры изометрии" />
      <IconButton $w={22} $gap={4} aria-label="Объектное отслеживание"><Icon w={17} h={16} s={STATUS_BLUE} sw={1.500}><path d="M1 14.500h16M2 14L15 2" /><path d="M7 8h2v2H7z" fill={STATUS_BLUE} /></Icon></IconButton>
      <IconButton $w={22} $gap={3} aria-label="Объектная привязка"><Icon w={18} h={18} s={STATUS_BLUE}><path d="M3.500 3.500h13v13h-13z" strokeWidth="1.500" /><path d="M1.500 1.500h4v4h-4z" fill="#3fc23a" stroke="#111" /></Icon></IconButton>
      <Arrow name="Параметры объектной привязки" />
      <IconButton $w={22} $gap={6} aria-label="Показать аннотации"><AnnotationMark mode="star" /></IconButton>
      <IconButton $w={22} $gap={2} aria-label="Автомасштаб"><AnnotationMark mode="bolt" /></IconButton>
      <IconButton $w={22} $gap={2} aria-label="Масштаб аннотаций"><AnnotationMark mode="plain" /></IconButton>
      <StatusText $w={28} $gap={4} $tight>1:1 <Caret size={7} color="#000" /></StatusText>
      <IconButton $w={22} $gap={6} aria-label="Рабочее пространство">
        <Icon w={14} h={14} s="#555"><circle cx="7" cy="7" r="4" strokeWidth="3" /><circle cx="7" cy="7" r="6" strokeWidth="2" strokeDasharray="2.400 2.300" /></Icon>
      </IconButton>
      <Arrow name="Список пространств" gap={2} />
      <IconButton $w={22} $gap={4} aria-label="Монитор аннотаций"><Icon w={15} h={15} s="#555" sw={2}><path d="M7.500 0v15M0 7.500h15" /></Icon></IconButton>
      <IconButton $w={22} $gap={5} aria-label="Производительность"><Icon w={18} h={18}><circle cx="9" cy="9" r="8" fill="#0d5cab" stroke="#6fb0ea" /><path d="M8 11l5-4" stroke="#5da2e0" /></Icon></IconButton>
      <IconButton $w={22} $gap={7} aria-label="Изоляция объектов"><Icon w={16} h={16} s="#555"><path d="M1.500 1.500h6v6h-6z" /><circle cx="12" cy="7" r="3.200" /><path d="M3 14.500L6 9.500l3 5z" /></Icon></IconButton>
      <IconButton $w={22} $gap={9} aria-label="Полный экран"><Icon w={17} h={14} s="#444"><path d="M.5 1h16v12H.5zM4 10l3-3M10 7l3-3" strokeWidth="1.200" /><path d="M3 11V7l4 4zM14 3v4l-4-4z" fill="#444" stroke="none" /></Icon></IconButton>
      <IconButton $w={22} $gap={2} aria-label="Адаптация"><Icon w={15} h={13} s="#555" sw={2}><path d="M0 2h15M0 7h15M0 12h15" /></Icon></IconButton>
    </StatusBar>
  </Footer>
);

export default function App() {
  return (
    <>
      <GlobalStyle />
      <Window>
        <TopBar />
        <Ribbon>
          <DrawPanel />
          <ModifyPanel />
          <AnnotatePanel />
          {slimPanels.map((p) => (
            <SlimPanel key={p.name}>
              {p.icon}
              <SlimLabel>{p.name}</SlimLabel>
              <Caret size={8} />
            </SlimPanel>
          ))}
        </Ribbon>
        <FileTabs>
          <FileTab>
            <span>Чертеж1</span>
            <SmallButton aria-label="Закрыть чертеж"><Icon w={8} h={8} s="#999" sw={1.500}><path d="M1 1l6 6M7 1L1 7" /></Icon></SmallButton>
          </FileTab>
          <AddTab aria-label="Новый чертеж"><Plus /></AddTab>
        </FileTabs>
        <DrawingArea />
        <BottomBar />
      </Window>
    </>
  );
}
